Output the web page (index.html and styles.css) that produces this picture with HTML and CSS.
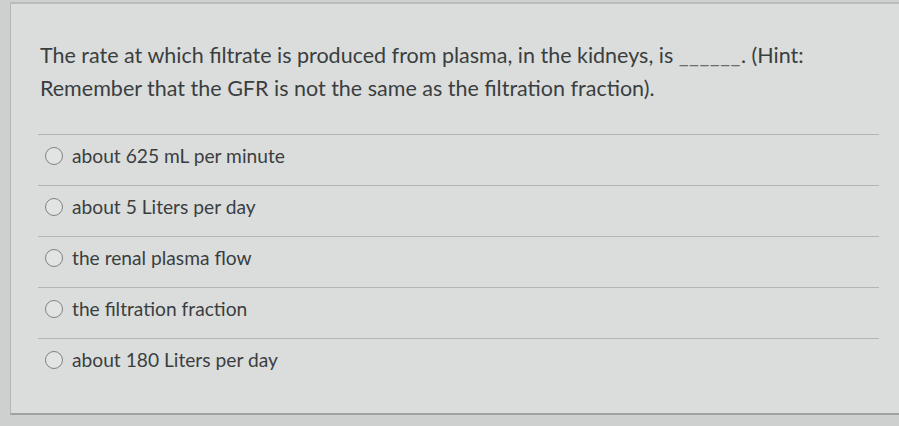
FILE: index.html
```html
<!DOCTYPE html>
<html>
<head>
<meta charset="utf-8">
<link rel="stylesheet" href="styles.css">
</head>
<body>
<div class="panel">
  <div class="question">
    <p class="qtext">The rate at which filtrate is produced from plasma, in the kidneys, is <span class="blank">______</span>. (Hint: Remember that the GFR is not the same as the filtration fraction).</p>
  </div>
  <ul class="answers">
    <li class="answer"><span class="radio"></span><span class="label">about 625 mL per minute</span></li>
    <li class="answer"><span class="radio"></span><span class="label">about 5 Liters per day</span></li>
    <li class="answer"><span class="radio"></span><span class="label">the renal plasma flow</span></li>
    <li class="answer"><span class="radio"></span><span class="label">the filtration fraction</span></li>
    <li class="answer"><span class="radio"></span><span class="label">about 180 Liters per day</span></li>
  </ul>
</div>
</body>
</html>
```

FILE: styles.css
```css
html, body {
  margin: 0;
  padding: 0;
}
body {
  width: 899px;
  height: 426px;
  background: #cdd0cf;
  font-family: Lato, "Open Sans", sans-serif;
  color: #3b3e3f;
  overflow: hidden;
}
.panel {
  margin-left: 10px;
  margin-top: 2px;
  width: 889px;
  height: 413px;
  box-sizing: border-box;
  background: #dadddc;
  border-top: 2px solid #b9bcbb;
  border-left: 1px solid #b3b6b5;
  border-bottom: 2px solid #9fa2a1;
}
.question {
  padding: 35px 0 0 29px;
  height: 93px;
  box-sizing: border-box;
}
.qtext {
  margin: 0;
  width: 800px;
  font-size: 21.5px;
  line-height: 33px;
}
.blank {
  letter-spacing: 0.5px;
  color: #6a6d6c;
}
.answers {
  list-style: none;
  margin: 0 0 0 27px;
  padding: 0;
  width: 841px;
}
.answer {
  display: flex;
  align-items: center;
  gap: 9px;
  height: 51px;
  border-top: 1px solid #b2b5b4;
  box-sizing: border-box;
  padding-left: 7px;
  padding-bottom: 9px;
  font-size: 19.2px;
}
.answer:first-child {
  margin-top: 37px;
}
.radio {
  width: 18px;
  height: 18px;
  border-radius: 50%;
  border: 1.5px solid #7f8382;
  background: #e2e4e3;
  box-sizing: border-box;
  flex: none;
}
```
